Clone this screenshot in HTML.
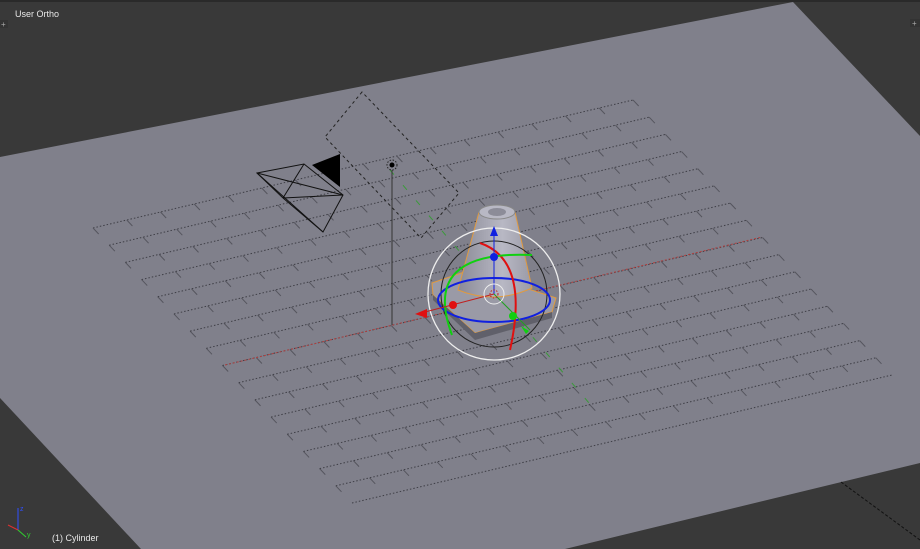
<!DOCTYPE html>
<html><head><style>
body{margin:0;width:920px;height:549px;overflow:hidden;background:#393939;font-family:"Liberation Sans",sans-serif}
.t{position:absolute;color:#e8e8e8;font-size:9px}
</style></head><body>
<svg width="920" height="549" style="position:absolute;left:0;top:0">
<defs><linearGradient id="cg" x1="0" x2="1"><stop offset="0" stop-color="#8a8a96"/><stop offset="0.6" stop-color="#b8b8c4"/><stop offset="1" stop-color="#9a9aa6"/></linearGradient></defs>
<rect x="0" y="0" width="920" height="2" fill="#2a2a2a"/>
<polygon points="0,157 793,2 920,136 920,463 565,549 141,549 0,398" fill="#80808b"/>
<line x1="841" y1="482" x2="920" y2="540" stroke="#111" stroke-width="1" stroke-dasharray="3,2"/>
<g id="grid" fill="none"></g>
<line x1="225" y1="365" x2="762" y2="237" stroke="#b04040" stroke-dasharray="2,2"/>
<line x1="390" y1="170" x2="595" y2="410" stroke="#3a9a3a" stroke-dasharray="6,14"/>
<polygon points="362,92 325,137 421,238 459,193" fill="none" stroke="#222" stroke-dasharray="3,3"/>
<line x1="392" y1="170" x2="392" y2="325" stroke="#333"/>
<circle cx="392" cy="165" r="5" fill="none" stroke="#222" stroke-dasharray="1.5,1.5"/>
<circle cx="392" cy="165" r="2.5" fill="#000"/>
<g stroke="#111" fill="none" stroke-width="1">
<polygon points="257,173 304,164 343,195 323,232"/>
<line x1="257" y1="173" x2="343" y2="195"/>
<line x1="304" y1="164" x2="283" y2="198"/>
<line x1="283" y1="198" x2="323" y2="232"/>
<line x1="283" y1="198" x2="343" y2="195"/>
<line x1="257" y1="173" x2="283" y2="198"/>
</g>
<polygon points="312,165 340,154 340,187" fill="#000"/>
<polygon points="432,283 470,270 556,298 552,312 475,333 433,295" fill="#9a9aa6" stroke="#e09a40"/>
<polygon points="433,295 475,333 552,312 552,318 475,340 433,300" fill="#60606a"/>
<path d="M479,212 L458,290 Q495,305 532,288 L515,212 Z" fill="url(#cg)" stroke="#e09a40"/>
<ellipse cx="497" cy="212" rx="18" ry="7" fill="#b8b8c4" stroke="#888"/>
<ellipse cx="497" cy="212" rx="9" ry="4" fill="#8c8c98"/>
<circle cx="494" cy="294" r="66" fill="none" stroke="#eee" stroke-width="1.3"/>
<circle cx="494" cy="294" r="53" fill="none" stroke="#222" stroke-width="1"/>
<ellipse cx="494" cy="300" rx="56" ry="22" fill="none" stroke="#1020e0" stroke-width="2"/>
<path d="M480,243 Q530,260 510,350" fill="none" stroke="#e01010" stroke-width="2"/>
<path d="M452,335 Q420,250 532,255" fill="none" stroke="#10d010" stroke-width="2"/>
<line x1="494" y1="294" x2="494" y2="230" stroke="#1020e0"/>
<line x1="494" y1="294" x2="425" y2="312" stroke="#c02020"/>
<line x1="494" y1="294" x2="530" y2="330" stroke="#20a020"/>
<circle cx="494" cy="257" r="4" fill="#1020e0"/>
<circle cx="453" cy="305" r="4" fill="#e01010"/>
<circle cx="513" cy="316" r="4" fill="#10d010"/>
<polygon points="494,226 490,236 498,236" fill="#1020e0"/>
<polygon points="415,314 427,309 427,318" fill="#e01010"/>
<polygon points="529,331 521,326 526,334" fill="#10d010"/>
<circle cx="494" cy="294" r="10" fill="none" stroke="#eee"/>
<circle cx="494" cy="294" r="4" fill="none" stroke="#c02020" stroke-dasharray="1.5,1.5"/>
<line x1="18" y1="530" x2="18" y2="508" stroke="#3050ff"/>
<line x1="18" y1="530" x2="8" y2="525" stroke="#e03030"/>
<line x1="18" y1="530" x2="26" y2="537" stroke="#30d030"/>
<text x="20" y="511" font-size="7" fill="#3050ff">z</text>
<text x="27" y="537" font-size="7" fill="#30d030">y</text>
<rect x="0" y="20" width="8" height="8" fill="#333"/><text x="1" y="27" font-size="8" fill="#aaa">+</text>
<rect x="910" y="19" width="10" height="8" fill="#333"/><text x="912" y="26" font-size="8" fill="#aaa">+</text>
</svg>
<div class="t" style="left:15px;top:9px">User Ortho</div>
<div class="t" style="left:52px;top:533px">(1) Cylinder</div>
<script>
var g=document.getElementById('grid'),ns='http://www.w3.org/2000/svg';
var TL=[93,228],TR=[633,100],BL=[352,503],N=16;
function L(a,b,s,d,o){var l=document.createElementNS(ns,'line');l.setAttribute('x1',a[0]);l.setAttribute('y1',a[1]);l.setAttribute('x2',b[0]);l.setAttribute('y2',b[1]);l.setAttribute('stroke',s);l.setAttribute('stroke-dasharray',d);l.setAttribute('stroke-dashoffset',o);g.appendChild(l);}
var u=[TR[0]-TL[0],TR[1]-TL[1]],v=[BL[0]-TL[0],BL[1]-TL[1]];
var vl=Math.hypot(v[0],v[1])/N;
for(var i=0;i<=N;i++){var t=i/N;
L([TL[0]+v[0]*t,TL[1]+v[1]*t],[TL[0]+v[0]*t+u[0],TL[1]+v[1]*t+u[1]],'#3e3e46','1.5,2',0);
L([TL[0]+u[0]*t,TL[1]+u[1]*t],[TL[0]+u[0]*t+v[0],TL[1]+u[1]*t+v[1]],'#55555e',(vl*0.35)+','+(vl*0.65),0);}
</script>
</body></html>
